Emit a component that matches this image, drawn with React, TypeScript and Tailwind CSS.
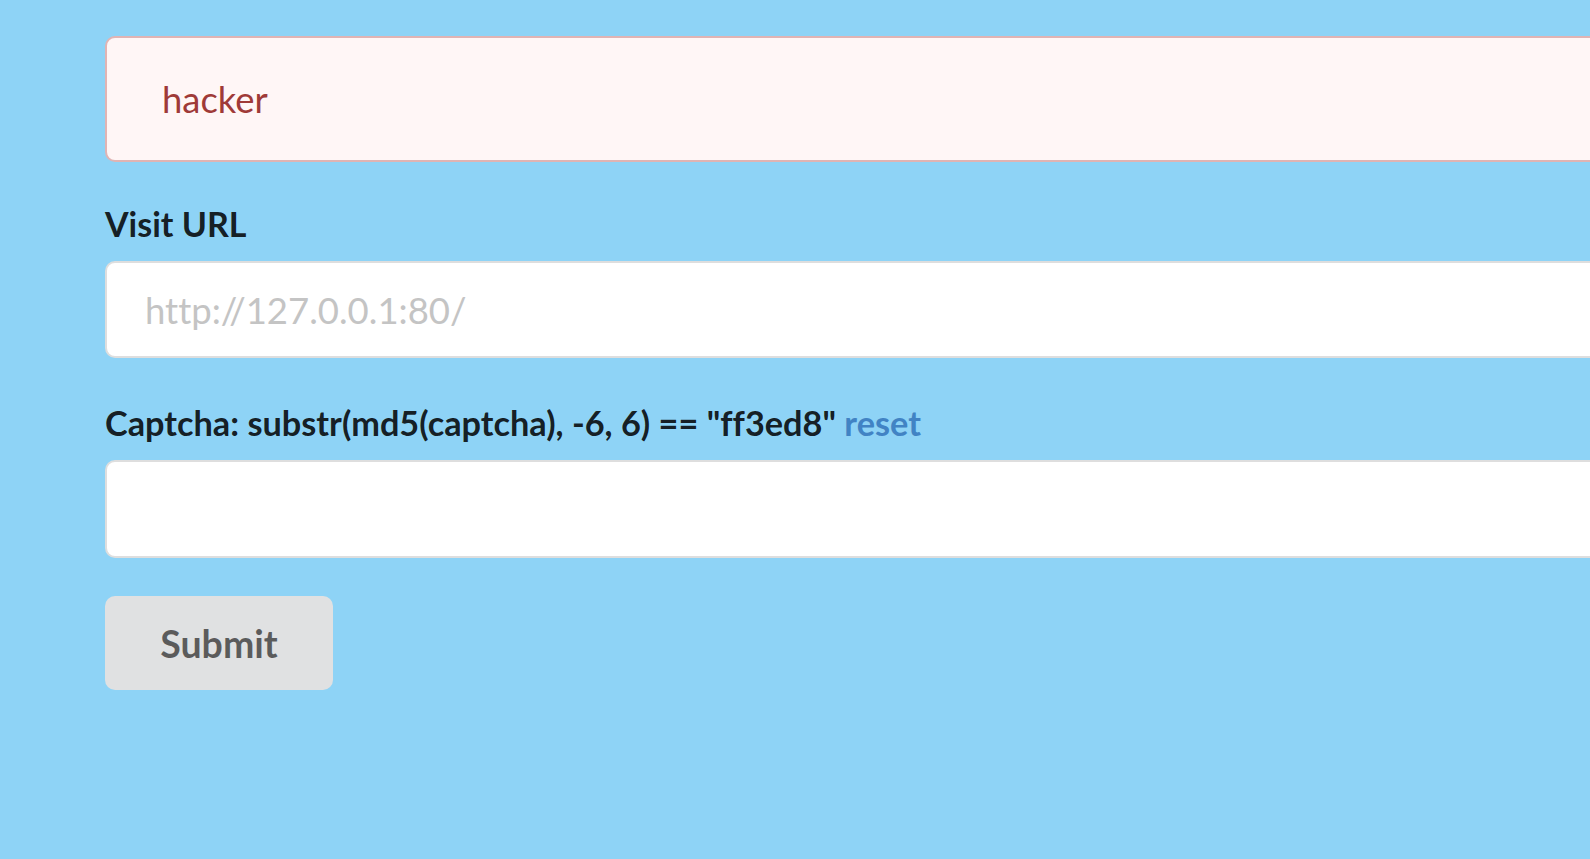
import React from "react";

const font = { fontFamily: "Lato, 'Helvetica Neue', Arial, sans-serif" };

export default function App() {
  return (
    <div
      style={font}
      className="h-screen w-screen overflow-hidden bg-[#8ed3f6] pl-[105px] pt-[36px] [font-variant-ligatures:none]"
    >
      <form className="w-[1560px]" onSubmit={(e) => e.preventDefault()}>
        {/* error message */}
        <div className="flex h-[126px] items-center rounded-[10px] border-[2.5px] border-[#e0b4b4] bg-[#fff6f6] px-[55px] text-[36.4px] text-[#9f3a38]">
          hacker
        </div>

        <label className="mt-[42px] mb-[17px] block text-[34px] font-bold leading-[40px] text-[rgba(0,0,0,0.87)]">
          Visit URL
        </label>
        <input
          type="text"
          placeholder="http://127.0.0.1:80/"
          className="block h-[97px] w-full rounded-[10px] border-[2.5px] border-[#dedede] bg-white px-[38px] text-[36.5px] text-[rgba(0,0,0,0.87)] outline-none placeholder:text-[#c4c4c4]"
        />

        <label className="mt-[45px] mb-[17px] block text-[34.3px] font-bold leading-[40px] text-[rgba(0,0,0,0.87)]">
          Captcha: substr(md5(captcha), -6, 6) == "ff3ed8"{" "}
          <a href="#" className="text-[#4183c4]">
            reset
          </a>
        </label>
        <input
          type="text"
          className="block h-[98px] w-full rounded-[10px] border-[2.5px] border-[#dedede] bg-white px-[38px] text-[36.5px] text-[rgba(0,0,0,0.87)] outline-none"
        />

        <button
          type="submit"
          className="mt-[38px] flex h-[94px] w-[228px] items-center justify-center rounded-[10px] bg-[#e0e1e2] pt-[2px] text-[37.5px] font-bold text-[rgba(0,0,0,0.6)]"
        >
          Submit
        </button>
      </form>
    </div>
  );
}
